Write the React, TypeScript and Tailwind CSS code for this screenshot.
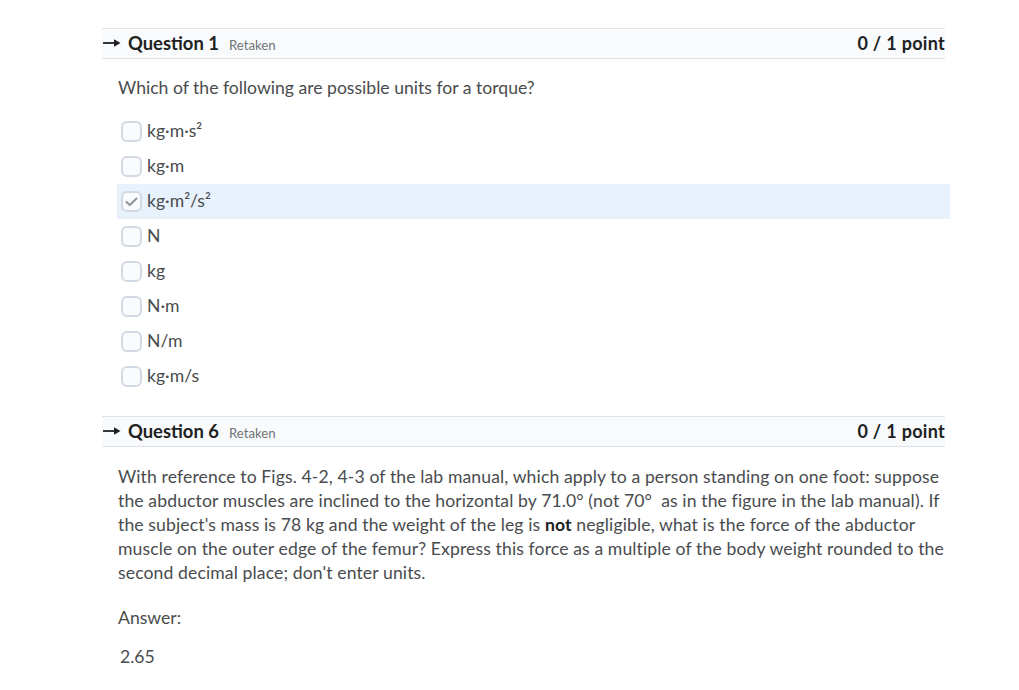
import React from "react";

const options = ["kg·m·s²", "kg·m", "kg·m²/s²", "N", "kg", "N·m", "N/m", "kg·m/s"];

function Arrow() {
  return (
    <svg width="20" height="12" viewBox="0 0 20 12" className="mr-[6px]">
      <line x1="1" y1="6" x2="13" y2="6" stroke="#202122" strokeWidth="1.8" />
      <path d="M12 2.2 L18.5 6 L12 9.8 Z" fill="#202122" />
    </svg>
  );
}

function Header({ n }: { n: number }) {
  return (
    <div className="flex items-center justify-between h-[31px] border-y border-[#dfe3e8] bg-[#f9fafc] w-[843px]">
      <div className="flex items-baseline">
        <div className="self-center flex items-center"><Arrow /></div>
        <span className="text-[18.4px] font-bold text-[#202122]">Question {n}</span>
        <span className="ml-[10px] text-[13.2px] text-[#6e7376]">Retaken</span>
      </div>
      <span className="text-[18px] font-bold text-[#202122] tracking-[0.3px]">0 / 1 point</span>
    </div>
  );
}

function Box({ checked }: { checked: boolean }) {
  return (
    <div className="w-[21px] h-[21px] rounded-[6px] border-2 border-[#d3d9e3] bg-[#f9fbff] flex items-center justify-center shrink-0">
      {checked && (
        <svg width="13" height="10" viewBox="0 0 13 10">
          <path d="M1.5 5 L4.8 8 L11.5 1.5" fill="none" stroke="#8f9499" strokeWidth="2" strokeLinecap="round" strokeLinejoin="round" />
        </svg>
      )}
    </div>
  );
}

export default function App() {
  return (
    <div className="w-[1019px] h-[690px] bg-white overflow-hidden text-[#494c4e]" style={{ fontFamily: "Lato, 'Noto Sans', sans-serif" }}>
      <div className="pl-[102px] pt-[28px]">
        <Header n={1} />
        <div className="pl-[16px] pt-[17px] text-[17.6px] leading-[24px]">Which of the following are possible units for a torque?</div>
        <div className="ml-[15px] mt-[14px] w-[833px] flex flex-col">
          {options.map((o, i) => (
            <div key={i} className={`h-[35px] flex items-center pl-[4px] ${i === 2 ? "bg-[#e8f2fc]" : ""}`}>
              <Box checked={i === 2} />
              <span className="ml-[5px] text-[17.6px]">{o}</span>
            </div>
          ))}
        </div>
        <div className="mt-[22px]">
          <Header n={6} />
        </div>
        <div className="ml-[16px] pt-[18px] text-[17.6px] leading-[24px] tracking-[0.11px] w-[835px]">
          With reference to Figs. 4-2, 4-3 of the lab manual, which apply to a person standing on one foot: suppose the abductor muscles are inclined to the horizontal by 71.0° (not 70°&nbsp; as in the figure in the lab manual). If the subject's mass is 78 kg and the weight of the leg is <b className="text-[#202122]">not</b> negligible, what is the force of the abductor muscle on the outer edge of the femur? Express this force as a multiple of the body weight rounded to the second decimal place; don't enter units.
        </div>
        <div className="pl-[16px] pt-[21px] text-[17.6px] leading-[24px]">Answer:</div>
        <div className="pl-[18px] pt-[15px] text-[17.6px] leading-[24px]">2.65</div>
      </div>
    </div>
  );
}
